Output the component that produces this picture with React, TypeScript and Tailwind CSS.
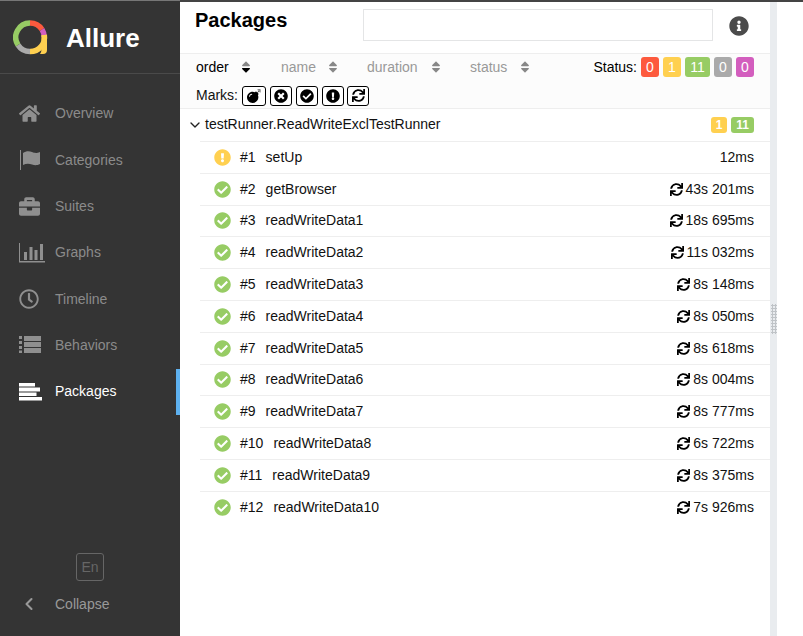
import { FaBomb, FaBriefcase, FaCheckCircle, FaExclamationCircle, FaHome, FaInfoCircle, FaRegClock, FaSort, FaSortDown, FaSync, FaTimesCircle } from "react-icons/fa";
import { FiChevronDown, FiChevronLeft } from "react-icons/fi";
import { ReactNode } from "react";

const Logo = () => (
  <svg width="36" height="36" viewBox="0 0 36 36" className="shrink-0">
    <g fill="none" strokeWidth="5.5">
      <path d="M17 3 A14.3 14.3 0 0 1 29 9.5" stroke="#fd5a3e" />
      <path d="M29 9.5 A14.3 14.3 0 0 1 31.3 17" stroke="#d35ebe" />
      <path d="M17 31.6 A14.3 14.3 0 0 1 5 25" stroke="#aaaaaa" />
      <path d="M5 25 A14.3 14.3 0 0 1 17 3" stroke="#97cc64" />
      <path d="M31.3 15 A14.3 14.3 0 0 1 17 31.6" stroke="#ffd050" />
    </g>
    <path d="M28.5 15 H34 V30 Q34 34 30 34 H27 Q28.5 32 28.5 29 Z" fill="#ffd050" />
  </svg>
);

const FlagIcon = () => (
  <svg width="22" height="20" viewBox="0 0 22 20" fill="currentColor">
    <path d="M1 0h1v20H1z" />
    <path d="M4 3c3-2 6-2 9-1s4 1.500 8 0v12c-3 1.500-5 1.500-8 .5s-6-1-9 .5z" />
  </svg>
);

const GraphIcon = () => (
  <svg width="26" height="20" viewBox="0 0 26 20" fill="currentColor">
    <path d="M0 0h1v18h25v1.500H0z" />
    <path d="M5 9h3v8H5zM10.500 4h3v13h-3zM15.500 7h3v10h-3zM21 1h3v16h-3z" />
  </svg>
);

const BehaviorIcon = () => (
  <svg width="22" height="18" viewBox="0 0 22 18" fill="currentColor">
    <path d="M0 0h3v3H0zM5 0h17v5H5zM0 5h3v3H0zM5 6h17v5H5zM0 10h3v3H0zM5 12h17v5H5zM0 14.500h3v2.500H0z" />
  </svg>
);

const PackageIcon = () => (
  <svg width="23" height="18" viewBox="0 0 23 18" fill="currentColor">
    <path d="M0 0h16v3.500H0zM0 4.500h21v4H0zM0 9.500h17.500v3.500H0zM0 14h23v3.500H0z" />
  </svg>
);

const navItems = [
  { label: "Overview", icon: <FaHome size={21} /> },
  { label: "Categories", icon: <FlagIcon /> },
  { label: "Suites", icon: <FaBriefcase size={21} /> },
  { label: "Graphs", icon: <GraphIcon /> },
  { label: "Timeline", icon: <FaRegClock size={20} /> },
  { label: "Behaviors", icon: <BehaviorIcon /> },
  { label: "Packages", icon: <PackageIcon />, active: true },
];

const rows = [
  { n: 1, name: "setUp", time: "12ms", warn: true },
  { n: 2, name: "getBrowser", time: "43s 201ms", retry: true },
  { n: 3, name: "readWriteData1", time: "18s 695ms", retry: true },
  { n: 4, name: "readWriteData2", time: "11s 032ms", retry: true },
  { n: 5, name: "readWriteData3", time: "8s 148ms", retry: true },
  { n: 6, name: "readWriteData4", time: "8s 050ms", retry: true },
  { n: 7, name: "readWriteData5", time: "8s 618ms", retry: true },
  { n: 8, name: "readWriteData6", time: "8s 004ms", retry: true },
  { n: 9, name: "readWriteData7", time: "8s 777ms", retry: true },
  { n: 10, name: "readWriteData8", time: "6s 722ms", retry: true },
  { n: 11, name: "readWriteData9", time: "8s 375ms", retry: true },
  { n: 12, name: "readWriteData10", time: "7s 926ms", retry: true },
];

const SortItem = ({ label, className, active }: { label: string; className: string; active?: boolean }) => (
  <div className={`flex items-center pr-[2px] ${className} ${active ? "text-black" : "text-[#999999]"}`}>
    <span>{label}</span>
    <span className="relative ml-auto h-[14px] w-[10px]">
      <FaSort size={14} className="absolute left-0 top-0 text-[#888888]" />
      {active && <FaSortDown size={14} className="absolute left-0 top-0 text-black" />}
    </span>
  </div>
);

const Mark = ({ children, w }: { children: ReactNode; w: string }) => (
  <div className={`flex h-[20px] items-center justify-center rounded-[3px] border border-black bg-white ${w}`}>
    {children}
  </div>
);

const Badge = ({ value, color, w }: { value: string; color: string; w: string }) => (
  <div className={`flex h-[20px] items-center justify-center rounded-[3px] text-white ${color} ${w}`}>{value}</div>
);

export default function App() {
  return (
    <div className="flex h-screen w-[803px] overflow-hidden bg-white font-['Liberation_Sans',Arial,sans-serif] text-[14px] text-[#111111]">
      {/* Sidebar */}
      <aside className="flex w-[180px] shrink-0 flex-col border-t border-[#777777] bg-[#343434]">
        <div className="flex h-[73px] items-center gap-[17px] border-b border-[#4a4a4a] pl-[13px] pt-[1px]">
          <Logo />
          <span className="pt-[2px] text-[26px] font-bold text-white">Allure</span>
        </div>
        <nav className="mt-[16.800px] flex flex-col">
          {navItems.map((item) => (
            <div
              key={item.label}
              className={`flex h-[46.300px] items-center ${item.active ? "border-r-4 border-[#5db0ef] text-white" : "text-[#8f8f8f]"}`}
            >
              <span className="flex w-[55px] justify-start pl-[19px]">{item.icon}</span>
              <span className={item.active ? "text-white" : "text-[#8b8b8b]"}>{item.label}</span>
            </div>
          ))}
        </nav>
        <div className="mt-auto flex flex-col pb-[16px]">
          <div className="flex justify-center">
            <div className="flex h-[28px] w-[28px] items-center justify-center rounded-[3px] border border-[#666666] text-[#666666]">En</div>
          </div>
          <div className="mt-[7px] flex h-[32px] items-center text-[#999999]">
            <span className="flex w-[55px] pl-[19px]"><FiChevronLeft size={20} strokeWidth={2.5} /></span>
            <span>Collapse</span>
          </div>
        </div>
      </aside>

      {/* Main pane */}
      <main className="flex w-[590px] shrink-0 flex-col border-t-2 border-[#444444]">
        <header className="flex h-[52px] shrink-0 border-b border-[#eeeeee] pl-[15px]">
          <h2 className="mt-[5px] w-[168px] text-[20px] font-bold leading-[26px] text-black">Packages</h2>
          <div className="mt-[7px] h-[32px] w-[350px] border border-[#e4e5e6]" />
          <div className="ml-[16px] mt-[14px] text-[#4b4b4b]"><FaInfoCircle size={20} /></div>
        </header>

        <div className="h-[55px] shrink-0 border-b border-[#eeeeee] bg-[#fcfcfc] px-[16px]">
          <div className="flex h-[26px] items-center">
            <SortItem label="order" active className="w-[55px]" />
            <div className="w-[30px]" />
            <SortItem label="name" className="w-[57px]" />
            <div className="w-[29px]" />
            <SortItem label="duration" className="w-[74px]" />
            <div className="w-[29px]" />
            <SortItem label="status" className="w-[60px]" />
            <div className="ml-auto flex items-center gap-[4px]">
              <span className="text-black">Status:</span>
              <Badge value="0" color="bg-[#fd5a3e]" w="w-[18px]" />
              <Badge value="1" color="bg-[#ffd050]" w="w-[18px]" />
              <Badge value="11" color="bg-[#97cc64]" w="w-[25px]" />
              <Badge value="0" color="bg-[#aaaaaa]" w="w-[18px]" />
              <Badge value="0" color="bg-[#d35ebe]" w="w-[18px]" />
            </div>
          </div>
          <div className="mt-[5px] flex items-center gap-[4px]">
            <span>Marks:</span>
            <Mark w="w-[24px]"><FaBomb size={14} className="text-black" /></Mark>
            <Mark w="w-[22px]"><FaTimesCircle size={14} className="text-black" /></Mark>
            <Mark w="w-[22px]"><FaCheckCircle size={14} className="text-black" /></Mark>
            <Mark w="w-[22px]"><FaExclamationCircle size={14} className="text-black" /></Mark>
            <Mark w="-ml-px w-[22px]"><FaSync size={13} className="text-black" /></Mark>
          </div>
        </div>

        {/* Tree */}
        <div className="flex h-[32px] shrink-0 items-center pb-[1px] pl-[7px] pr-[16px]">
          <FiChevronDown size={16} className="text-[#222222]" />
          <span className="ml-[2px]">testRunner.ReadWriteExclTestRunner</span>
          <div className="ml-auto flex gap-[4px] text-[12px] font-bold text-white">
            <div className="flex h-[16px] w-[16px] items-center justify-center rounded-[3px] bg-[#ffd050]">1</div>
            <div className="flex h-[16px] w-[23px] items-center justify-center rounded-[3px] bg-[#97cc64]">11</div>
          </div>
        </div>
        <div className="ml-[20px] flex flex-col">
          {rows.map((row) => (
            <div key={row.n} className="flex h-[31.800px] items-center border-t border-[#eeeeee] pl-[14px] pr-[16px]">
              {row.warn ? (
                <FaExclamationCircle size={17} className="text-[#ffd050]" />
              ) : (
                <FaCheckCircle size={17} className="text-[#97cc64]" />
              )}
              <span className="ml-[9px]">#{row.n}</span>
              <span className="ml-[10px]">{row.name}</span>
              <span className="ml-auto flex items-center gap-[3px]">
                {row.retry && <FaSync size={13} className="text-black" />}
                {row.time}
              </span>
            </div>
          ))}
        </div>
      </main>

      {/* Splitter gutter */}
      <div className="flex w-[7px] shrink-0 items-center border-t-2 border-[#444444] bg-[#e9ecef] pl-[1px]">
        <div className="h-[30px] w-[6px] bg-[radial-gradient(#bfc3c7_1.300px,transparent_1.300px)] bg-[length:3px_3px]" />
      </div>
      <div className="flex-1 border-t-2 border-[#444444] bg-white" />
    </div>
  );
}
